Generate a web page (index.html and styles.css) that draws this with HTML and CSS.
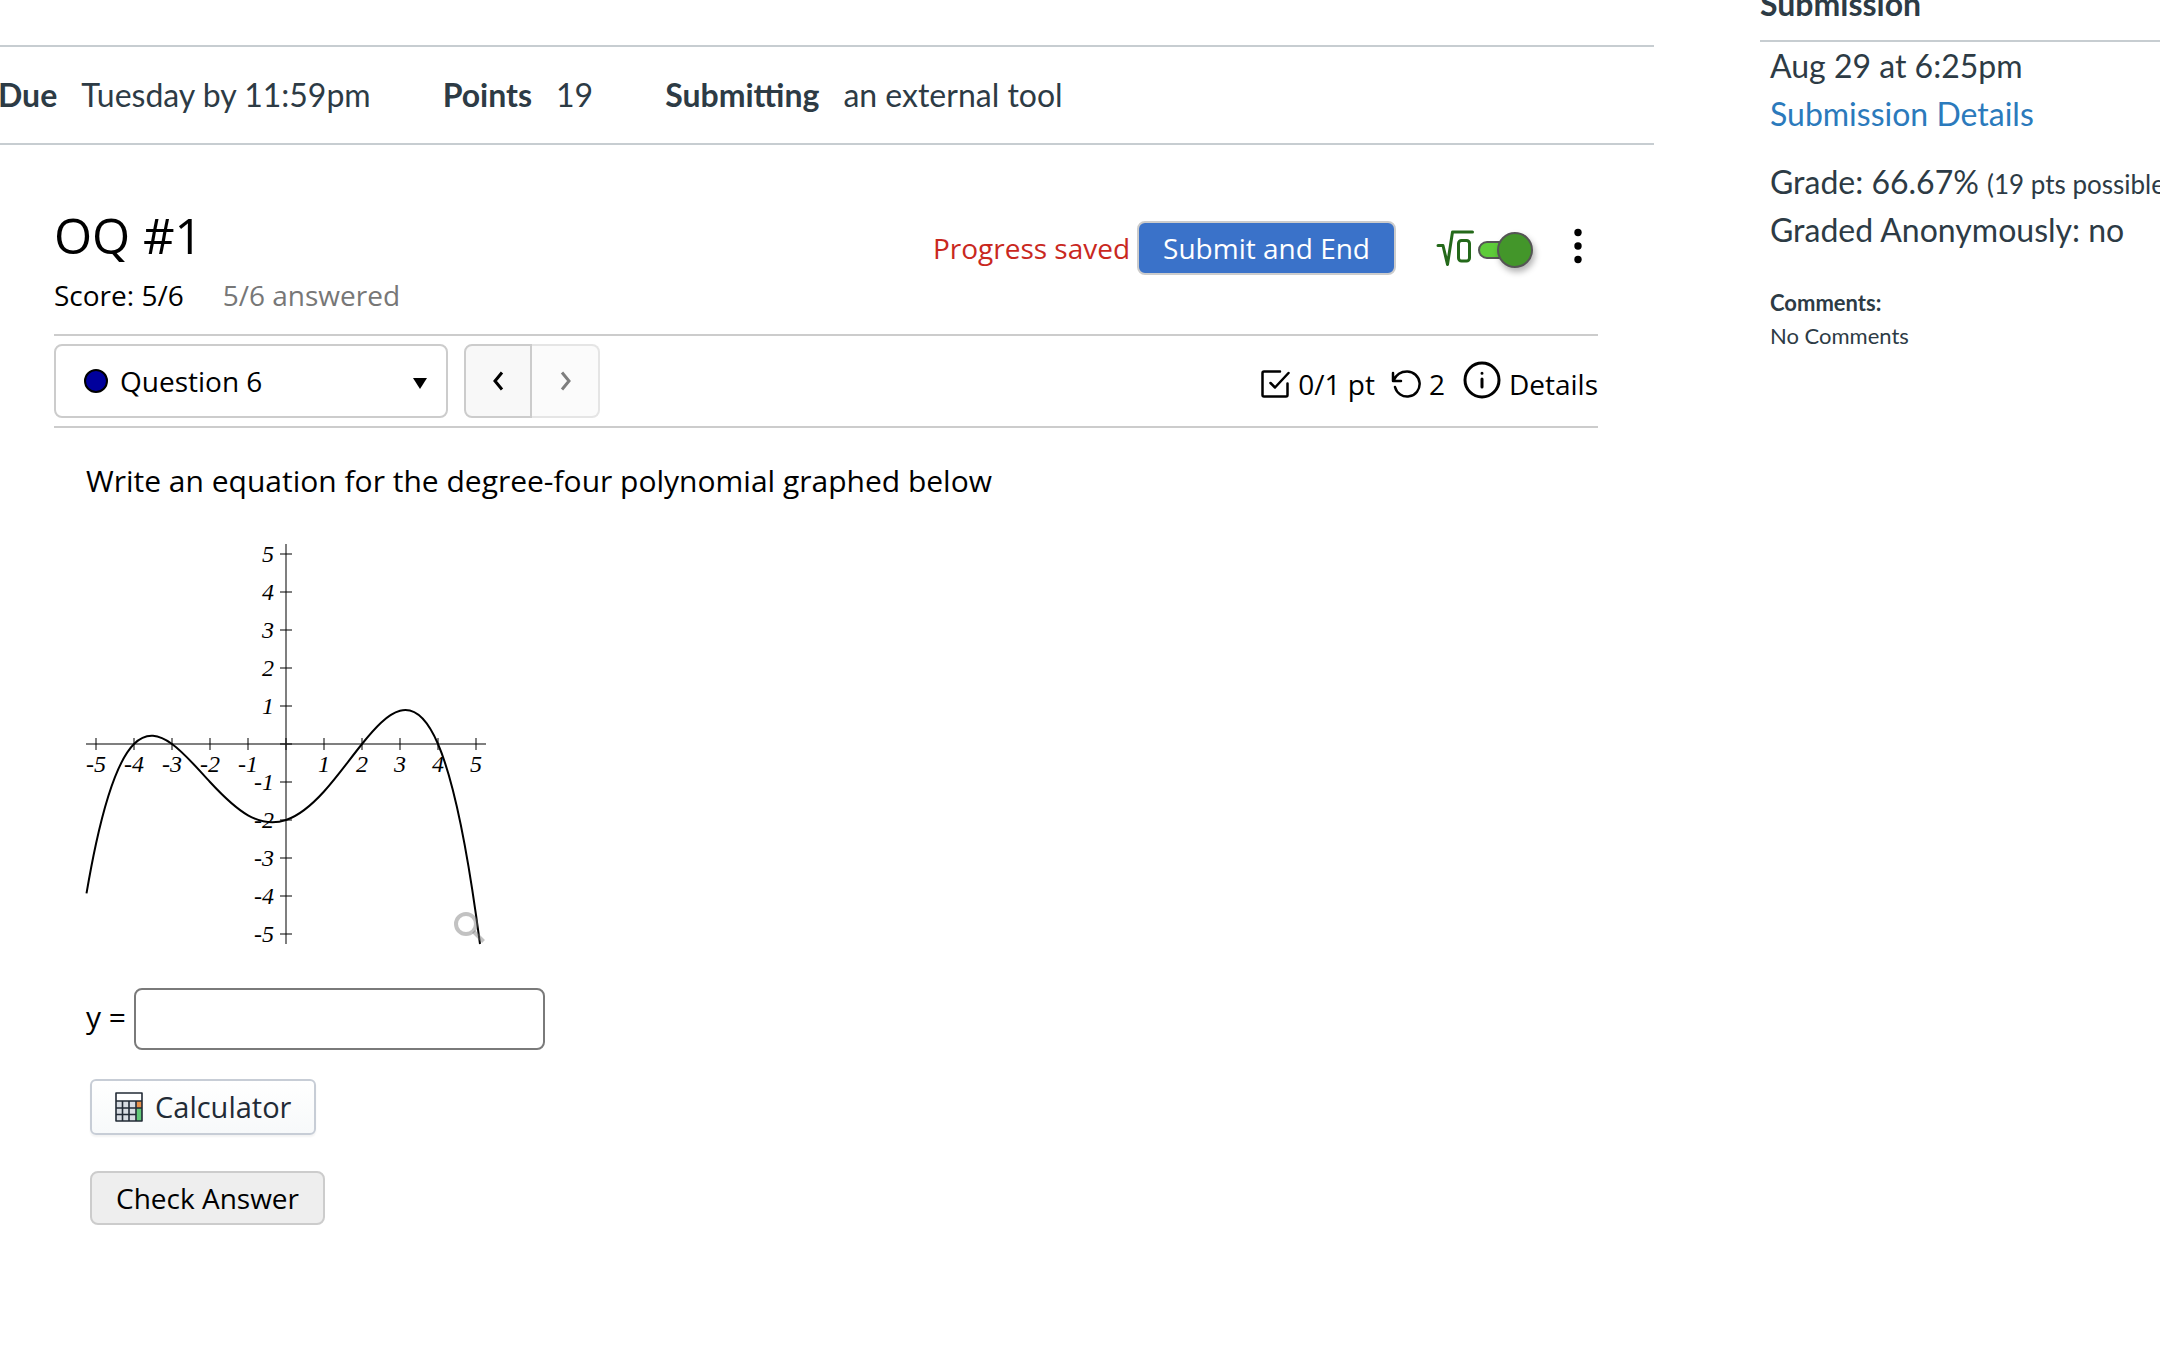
FILE: index.html
```html
<!DOCTYPE html>
<html lang="en">
  <head>
    <meta charset="UTF-8" />
    <meta name="viewport" content="width=device-width, initial-scale=1.0" />
    <title>OQ #1</title>
    <link rel="stylesheet" href="styles.css">
  </head>
  <body>
    <div class="page">
      <main>
        <ul class="assignment-info">
          <li><b>Due</b><span>Tuesday by 11:59pm</span></li>
          <li><b>Points</b><span>19</span></li>
          <li><b>Submitting</b><span>an external tool</span></li>
        </ul>

        <div class="quiz">
          <header class="quiz-header">
            <div>
              <h1>OQ #1</h1>
              <p class="score"><span>Score: 5/6</span><span class="answered">5/6 answered</span></p>
            </div>
            <div class="quiz-actions">
              <span class="saved">Progress saved</span>
              <button class="btn primary" type="button">Submit and End</button>
              <label class="math-toggle">
                <svg width="38" height="37" viewBox="0 0 38 37" fill="none" stroke="#24691a" stroke-width="3" stroke-linejoin="round" stroke-linecap="round" aria-hidden="true">
                  <path d="M2 15.500H7L11.500 34.500L16.500 2H36.500" />
                  <rect x="22.500" y="10.500" width="11" height="20.500" rx="3" />
                </svg>
                <input class="switch" type="checkbox" checked aria-label="Equation editor" />
              </label>
              <button class="more" type="button" aria-label="More options">
                <svg width="8" height="36" viewBox="0 0 8 36"><circle cx="4" cy="4.500" r="3.700" /><circle cx="4" cy="18" r="3.700" /><circle cx="4" cy="31.500" r="3.700" /></svg>
              </button>
            </div>
          </header>

          <div class="question-bar">
            <div class="question-select">
              <select aria-label="Question">
                <option>Question 6</option>
              </select>
              <span class="dot"></span>
              <svg class="caret" width="16" height="12" viewBox="0 0 16 12"><path d="M1 1H15L8 12Z" /></svg>
            </div>
            <div class="pager">
              <button type="button" aria-label="Previous question">
                <svg width="14" height="20" viewBox="0 0 14 20"><path d="M11 1.500L4 10L11 18.500" /></svg>
              </button>
              <button type="button" aria-label="Next question" disabled>
                <svg width="14" height="20" viewBox="0 0 14 20"><path d="M4 1.500L11 10L4 18.500" /></svg>
              </button>
            </div>
            <div class="question-info">
              <svg width="30" height="30" viewBox="0 0 30 30" aria-hidden="true"><path d="M20 2.500H4Q2.500 2.500 2.500 4V26Q2.500 27.500 4 27.500H26Q27.500 27.500 27.500 26V14.500M10.500 14L15 18.500L28.500 4" /></svg>
              <span>0/1 pt</span>
              <svg class="retry" width="30" height="30" viewBox="0 0 30 30" aria-hidden="true"><path d="M2 4V12H10M2.500 11.500C5 6 10 2.500 16 2.500A12.500 12.500 0 1 1 4 18" /></svg>
              <span class="tries">2</span>
              <a class="details" href="#">
                <svg class="info" width="38" height="38" viewBox="0 0 38 38" aria-hidden="true"><circle cx="19" cy="19" r="17" /><path d="M19 18V26M19 12.200V12.300" /></svg>
                <span>Details</span>
              </a>
            </div>
          </div>

          <section class="question">
            <p>Write an equation for the degree-four polynomial graphed below</p>
            <svg class="graph" width="400" height="400" viewBox="0 0 400 400" role="img" aria-label="Graph of a degree-four polynomial">
              <g class="axes">
                <path d="M0 200H400M200 0V400" />
                <path d="M10 194V206M48 194V206M86 194V206M124 194V206M162 194V206M200 194V206M238 194V206M276 194V206M314 194V206M352 194V206M390 194V206" />
                <path d="M194 10H206M194 48H206M194 86H206M194 124H206M194 162H206M194 200H206M194 238H206M194 276H206M194 314H206M194 352H206M194 390H206" />
              </g>
              <g class="x-labels">
                <text x="10" y="228">-5</text>
                <text x="48" y="228">-4</text>
                <text x="86" y="228">-3</text>
                <text x="124" y="228">-2</text>
                <text x="162" y="228">-1</text>
                <text x="238" y="228">1</text>
                <text x="276" y="228">2</text>
                <text x="314" y="228">3</text>
                <text x="352" y="228">4</text>
                <text x="390" y="228">5</text>
              </g>
              <g class="y-labels">
                <text x="188" y="18">5</text>
                <text x="188" y="56">4</text>
                <text x="188" y="94">3</text>
                <text x="188" y="132">2</text>
                <text x="188" y="170">1</text>
                <text x="188" y="246">-1</text>
                <text x="188" y="284">-2</text>
                <text x="188" y="322">-3</text>
                <text x="188" y="360">-4</text>
                <text x="188" y="398">-5</text>
              </g>
              <!-- y = -(x+4)(x+3)(x-2)(x-4)/48, 38px per unit -->
              <path class="curve" d="M.5 349.300C3.700 330.800 6.800 314.400 10 299.800C22.700 241.400 35.300 212.700 48 200C60.700 187.300 73.300 190.800 86 200C98.700 209.200 111.300 224.300 124 238C136.700 251.700 149.300 264.100 162 271.300C174.700 278.400 187.300 280.200 200 276C212.700 271.800 225.300 261.500 238 247.500C250.700 233.500 263.300 215.800 276 200C288.700 184.200 301.300 170.200 314 166.800C326.700 163.300 339.300 170.400 352 200C364.700 229.600 377.300 281.500 390 371L394 400" />
              <g class="magnifier">
                <circle cx="380" cy="380" r="10" />
                <path d="M387.500 387.500L397.500 397.500" />
              </g>
            </svg>
            <div class="answer">
              <label for="answer">y =</label>
              <input id="answer" type="text" />
            </div>
            <button class="btn calculator" type="button">
              <svg width="28" height="30" viewBox="0 0 28 30" aria-hidden="true">
                <rect x="1" y="1" width="26" height="28" fill="#d8dde3" />
                <rect x="1" y="1" width="26" height="8" fill="#fff" />
                <rect x="21" y="9" width="6" height="7" fill="#e8914a" />
                <rect x="21" y="16" width="6" height="13" fill="#62c878" />
                <path d="M1 9H27M1 16H27M1 22.500H21M7.500 9V29M14 9V29M21 9V29M1 1H27V29H1Z" fill="none" stroke="#222b36" stroke-width="1.600" stroke-linejoin="round" />
              </svg>
              <span>Calculator</span>
            </button>
            <button class="btn check" type="button">Check Answer</button>
          </section>
        </div>
      </main>

      <aside>
        <h2>Submission</h2>
        <div class="submission">
          <p>Aug 29 at 6:25pm<br /><a href="#">Submission Details</a></p>
          <p>Grade: 66.67% <small>(19 pts possible)</small><br />Graded Anonymously: no</p>
          <div class="comments"><b>Comments:</b><br />No Comments</div>
        </div>
      </aside>
    </div>
  </body>
</html>
```

FILE: styles.css
```css
* {
  box-sizing: border-box;
}
body {
  margin: 0;
  background: #fff;
  color: #2d3b45;
  font: 32px/48px Lato, "Liberation Sans", sans-serif;
  overflow: hidden;
}
h1,
h2,
p,
ul {
  margin: 0;
  padding: 0;
}
.page {
  display: grid;
  grid-template-columns: minmax(0, 1fr) 400px;
  column-gap: 106px;
}
main {
  padding-top: 45px;
}
.assignment-info {
  display: flex;
  gap: 72px;
  margin-left: -2px;
  padding: 24px 0;
  border-top: 2px solid #c7cdd1;
  border-bottom: 2px solid #c7cdd1;
  list-style: none;
}
.assignment-info li {
  display: flex;
  gap: 24px;
}

.quiz {
  padding: 56px 56px 0 54px;
  color: #000;
  font: 28px/42px "Open Sans", "Noto Sans", sans-serif;
}
.quiz-header {
  display: flex;
  justify-content: space-between;
  align-items: flex-start;
  padding-bottom: 13px;
}
h1 {
  font-size: 49px;
  font-weight: 400;
  line-height: 68px;
}
.score {
  display: flex;
  gap: 39px;
  line-height: 52px;
}
.answered {
  color: #777;
}
.quiz-actions {
  display: flex;
  align-items: center;
  padding-top: 20px;
}
.saved {
  margin-right: 7px;
  color: #c9281e;
}
.btn,
.more,
.pager button,
.question-select select {
  font: inherit;
  color: inherit;
}
.btn {
  border: 2px solid #ccc;
  border-radius: 8px;
  padding: 4px 24px;
}
.btn.primary {
  margin-right: 40px;
  background: #3a72c9;
  color: #fff;
}
.math-toggle {
  display: flex;
  align-items: center;
  gap: 4px;
}
.switch {
  appearance: none;
  display: flex;
  align-items: center;
  justify-content: flex-end;
  width: 54px;
  height: 18px;
  margin: 4px 0 0;
  border: 2px solid #555;
  border-radius: 9px;
  background: #5ecb3a;
}
.switch::before {
  content: "";
  flex: none;
  width: 32px;
  height: 32px;
  margin-right: -3px;
  border: 2px solid #555;
  border-radius: 50%;
  background: #43962a;
  box-shadow: 2px 4px 6px rgba(0, 0, 0, 0.3);
}
.more {
  display: flex;
  margin-left: 42px;
  padding: 0 16px 4px 0;
  border: 0;
  background: none;
}

.question-bar {
  display: flex;
  align-items: center;
  padding: 8px 0;
  border-top: 2px solid #ccc;
  border-bottom: 2px solid #ccc;
}
.question-select {
  position: relative;
  width: 394px;
}
.question-select select {
  appearance: none;
  display: block;
  width: 100%;
  height: 74px;
  padding: 0 64px;
  border: 2px solid #ccc;
  border-radius: 8px;
  background: #fff;
}
/* status dot and arrow sit over the native select */
.dot {
  position: absolute;
  left: 30px;
  top: 25px;
  width: 24px;
  height: 24px;
  border: 2px solid #000;
  border-radius: 50%;
  background: #00009c;
  pointer-events: none;
}
.caret {
  position: absolute;
  right: 20px;
  top: 33px;
  pointer-events: none;
}
.pager {
  display: flex;
  margin-left: 16px;
}
.pager button {
  display: flex;
  align-items: center;
  justify-content: center;
  width: 68px;
  height: 74px;
  padding: 0;
  border: 2px solid #ccc;
  border-radius: 8px 0 0 8px;
  background: #f8f8f8;
}
.pager button:disabled {
  border-left: 0;
  border-radius: 0 8px 8px 0;
  opacity: 0.5;
}
.pager svg {
  fill: none;
  stroke: #000;
  stroke-width: 3;
}
.question-info,
.details {
  display: flex;
  align-items: center;
}
.question-info {
  margin-left: auto;
  padding-top: 5px;
}
.question-info svg {
  margin-right: 8px;
  fill: none;
  stroke: #000;
  stroke-width: 2.5;
  stroke-linecap: round;
  stroke-linejoin: round;
}
.question-info .retry {
  margin-left: 16px;
}
.tries {
  margin-right: 18px;
}
.details {
  color: #000;
  text-decoration: none;
}
.question-info .info {
  margin: 0 8px 8px 0;
  stroke-width: 3;
}

.question {
  display: flex;
  flex-direction: column;
  align-items: flex-start;
  padding: 32px;
  font-size: 30px;
}
.graph {
  margin: 42px 0 44px;
  overflow: visible;
}
.axes path {
  fill: none;
  stroke: #000;
  stroke-opacity: 0.5;
  stroke-width: 2;
}
.graph text {
  font: italic 24px "Liberation Serif", serif;
}
.x-labels {
  text-anchor: middle;
}
.y-labels {
  text-anchor: end;
}
.curve {
  fill: none;
  stroke: #000;
  stroke-width: 2;
}
.magnifier {
  fill: none;
  stroke: #777;
  stroke-opacity: 0.45;
  stroke-width: 4;
}
.answer {
  display: flex;
  align-items: center;
  gap: 8px;
  margin-bottom: 29px;
}
.answer label {
  padding-bottom: 4px;
}
.answer input {
  width: 411px;
  height: 62px;
  padding: 0 12px;
  border: 2px solid #7a7a7a;
  border-radius: 8px;
  background: #fff;
  font: inherit;
}
.question .btn {
  margin-left: 4px;
  font-size: 28px;
}
.question .calculator {
  display: flex;
  align-items: center;
  gap: 12px;
  margin-bottom: 36px;
  padding: 5px 23px;
  border-color: #c7cdd6;
  border-radius: 6px;
  background: linear-gradient(#fff, #f7f9fa);
  box-shadow: 0 2px 2px rgba(0, 0, 0, 0.05);
  color: #222b36;
  font-size: 29px;
}
.check {
  background: #eee;
}

aside {
  margin-top: -20px;
  white-space: nowrap;
}
h2 {
  padding-bottom: 12px;
  border-bottom: 2px solid #c7cdd1;
  font-size: 32px;
  line-height: 48px;
}
.submission {
  padding: 0 10px;
}
.submission p {
  margin-bottom: 20px;
}
.submission a {
  color: #2b7abc;
  text-decoration: none;
}
small {
  font-size: 26px;
  line-height: 1;
}
.comments {
  padding-top: 12px;
  font-size: 22px;
  line-height: 33px;
}
```
